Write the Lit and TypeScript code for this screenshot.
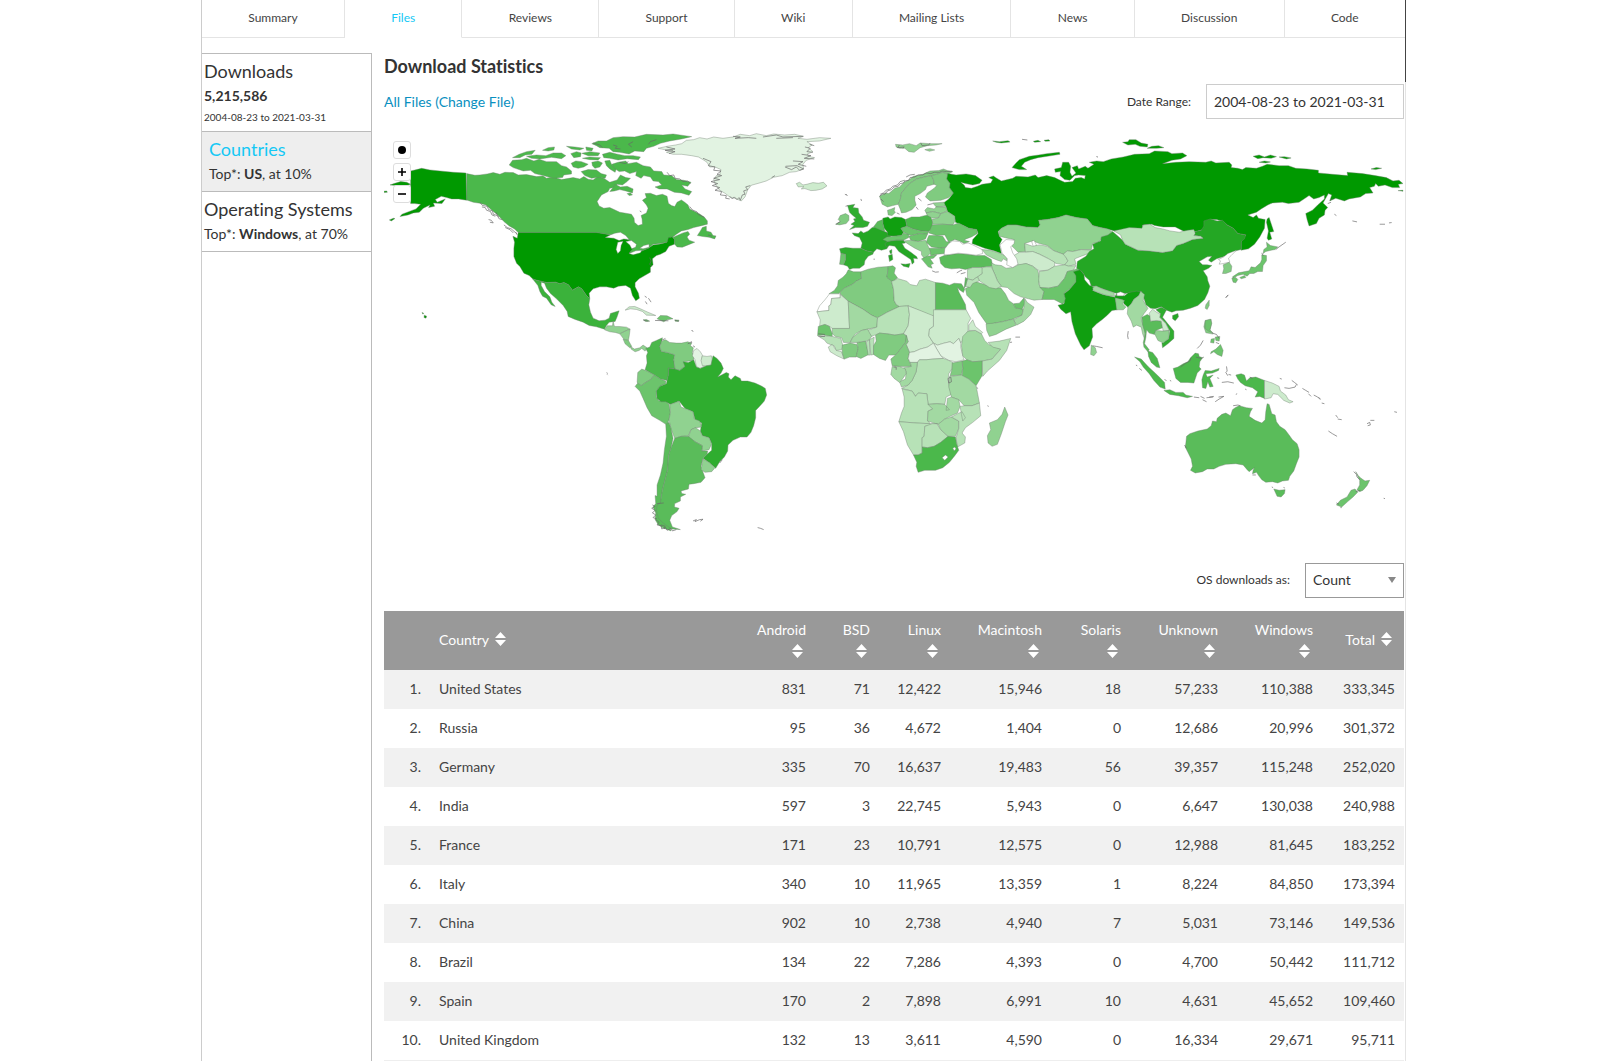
import { LitElement, html, css, svg } from "lit";
import { customElement, state } from "lit/decorators.js";

type Shape = [fill: string, points: string];
interface Region {
  x: number;
  y: number;
  shapes: Shape[];
  islands?: string;
}

const NONE = "#ffffff";
const T1 = "#e2f3e2";
const T2 = "#cdebcd";
const T3 = "#b7e2b7";
const T4 = "#a2d9a2";
const T5 = "#90d290";
const T6 = "#80cb80";
const T7 = "#6cc46c";
const T8 = "#5abc5a";
const T9 = "#4bb84b";
const T10 = "#3bb23b";
const T11 = "#2fad2f";
const T12 = "#24a724";
const T13 = "#109f10";
const T14 = "#009900";

const northAmerica: Region = {
  x: -12,
  y: 0,
  shapes: [
    [T9, "260,146 285,151 300,150 322,147 340,143 360,148 375,142 400,143 415,150 440,149 470,155 490,153 500,160 520,156 545,164 580,158 600,162 612,155 625,163 640,165 655,153 672,160 690,172 712,165 722,150 738,158 752,160 742,170 728,180 712,178 706,188 690,190 685,200 665,210 652,230 658,243 672,250 690,248 720,262 738,265 755,268 763,280 764,292 775,302 788,298 787,282 784,272 800,264 805,250 800,240 788,226 800,218 796,206 812,205 830,212 848,208 862,214 866,235 875,242 885,245 892,232 905,225 915,232 925,240 930,252 945,260 960,267 975,278 983,288 983,298 962,303 942,308 925,314 905,318 890,328 875,340 892,332 910,324 925,320 930,328 922,336 928,346 945,352 925,360 908,367 892,366 885,358 884,342 872,336 862,352 842,356 820,358 806,370 788,378 766,384 748,385 756,372 766,366 757,348 745,345 735,335 710,332 680,328 650,323 415,323 404,312 388,303 372,290 355,272 336,256 318,240 300,235 280,232 260,225"],
    [T9, "953,332 962,318 968,308 980,304 980,318 994,322 1000,332 1009,333 1005,342 988,337 970,335"],
    [T9, "388,120 398,106 425,104 440,100 462,108 478,103 500,110 530,110 545,122 560,126 575,138 575,147 552,150 548,158 520,160 490,152 465,146 452,136 430,138 400,128"],
    [T9, "398,98 418,88 440,80 466,76 456,88 436,90 420,98"],
    [T9, "440,94 470,90 498,92 520,84 545,84 558,92 545,101 515,97 480,102 455,100"],
    [T9, "488,76 505,68 524,66 522,75 505,78"],
    [T9, "560,64 585,66 612,70 600,75 575,72"],
    [T9, "573,86 590,80 604,84 602,95 582,98"],
    [T9, "618,66 640,70 636,78 620,76"],
    [T9, "636,56 655,48 680,48 700,38 730,35 765,36 800,28 850,30 880,27 936,35 905,42 870,48 842,55 822,64 800,70 792,80 765,78 748,87 720,82 700,80 688,70 660,68 650,62"],
    [T9, "668,88 690,82 710,87 735,92 760,92 782,96 776,104 742,101 715,105 690,100 672,98"],
    [T9, "606,85 630,80 660,84 655,92 625,92"],
    [T9, "574,115 588,108 605,110 625,118 612,126 595,130 580,126"],
    [T9, "608,100 630,96 662,98 655,105 630,104"],
    [T9, "636,112 655,108 668,114 660,126 645,130 638,122"],
    [T9, "604,140 625,134 650,135 664,146 680,150 676,160 655,157 635,160 615,152"],
    [T9, "675,108 690,106 695,118 710,130 706,142 690,132 680,122"],
    [T9, "696,118 715,112 738,108 745,116 770,112 790,122 812,126 822,138 846,140 852,150 875,152 890,164 912,166 934,172 924,184 906,180 916,192 936,200 928,211 905,204 884,202 862,192 838,192 826,186 846,180 836,170 820,168 812,156 792,152 784,160 768,152 770,140 750,146 735,138 718,140 704,130"],
    [T9, "690,200 700,188 706,178 722,186 742,184 760,192 758,204 738,198 720,194 704,198"],
    [T9, "742,206 752,204 758,210 748,212"],
    [T14, "92,138 110,134 125,130 150,135 180,138 220,142 258,144 260,226 236,222 215,222 200,218 184,214 166,224 172,232 196,222 186,236 160,234 164,244 146,248 150,240 130,250 118,262 100,264 84,270 60,275 66,268 92,258 108,252 122,238 104,236 92,236"],
    [T14, "30,180 42,176 62,170 80,172 92,178 75,184 50,182"],
    [T14, "11,199 20,198 22,202 13,203"],
    [T14, "28,285 40,280 45,281 34,288"],
    [T14, "415,323 650,323 680,328 710,334 735,338 745,345 757,348 762,368 748,385 766,384 788,378 806,370 820,360 842,357 862,352 866,338 877,336 884,344 884,358 868,364 858,380 842,388 830,392 818,402 820,420 812,428 812,442 795,452 778,462 766,474 766,486 776,505 779,520 768,528 758,512 752,490 738,482 716,484 702,490 680,486 660,486 640,492 628,505 630,522 620,512 606,492 596,486 585,492 578,496 566,480 552,473 540,477 528,472 500,473 470,466 458,462 448,452 432,445 420,425 410,415 402,395 402,370 404,352 399,334 412,340"],
    [NONE, "676,338 692,330 705,325 722,322 738,332 748,344 732,342 718,347 702,340"],
    [NONE, "714,352 730,349 724,362 722,378 714,386 709,374"],
    [NONE, "738,350 755,347 770,358 768,366 756,372 750,360"],
    [NONE, "748,386 768,378 786,376 782,384 760,390"],
    [NONE, "780,370 792,362 808,358 808,367 790,372"],
    [T10, "458,462 470,466 500,473 528,472 540,477 552,473 566,480 578,496 596,486 606,492 620,512 630,522 627,540 632,562 640,580 658,588 676,586 688,580 692,566 718,558 712,576 706,590 688,592 680,602 674,613 650,606 628,602 610,592 586,584 565,575 562,560 550,542 530,522 512,506 500,490 494,475 484,472 484,482 494,500 510,516 516,532 526,545 514,540 500,520 488,514 480,500 474,482"],
    [T2, "736,556 748,546 765,545 782,552 804,562 828,572 800,571 788,560 770,554 752,552"],
    [T7, "832,582 842,572 862,573 880,582 862,585 852,591"],
    [T7, "790,585 800,584 810,589 798,590"],
    [T7, "885,585 898,586 896,590 886,589"],
    [T14, "133,571 140,574 138,580 132,578"],
    [T14, "126,563 131,565 129,568"],
  ],
  islands: "M795 514l6 4M797 530l5 8M806 520l8 12M936 616l4 4M326 284l8 2l6 8l-10-2M300 232l8 10l14 2l4 10l12 4l2 10l12 4l6 10l10 2M306 246l10 2l4 8l12 4l4 10l10 4M372 300l10 8l12 4l16 14M376 308l14 6l10 10M408 322l4 8M348 262l8 14M810 398l4 10l-4 10l6 6M930 245l8 10l14 6l4 8l18 8M780 258l5 3M985 330l12 4M862 142l8 10l12-2l4 10l14 2l10 8l14-2l8 8M720 112l16 4l10-6M700 60l12 4l-6 6l16 2M760 50l-14 8l10 8M830 44l-18 6l-6 8M640 54l20 6l8 8",
};

const greenland: Region = {
  x: 708,
  y: 0,
  shapes: [
    [T1, "115,70 142,64 168,60 186,56 200,46 222,44 240,38 262,42 282,36 310,40 340,36 362,28 390,32 410,26 440,32 462,27 495,30 525,28 552,34 535,40 562,43 600,38 634,40 600,48 562,50 578,60 566,68 580,80 562,88 574,96 585,98 560,106 550,118 552,132 530,140 510,142 488,152 462,157 440,168 420,174 395,181 384,195 376,216 365,228 345,220 330,216 316,205 300,196 288,180 282,164 290,152 300,150 304,134 286,126 270,126 262,112 250,104 236,96 215,92 186,88 160,88 140,82 160,76 135,74"],
    [T2, "530,176 540,172 550,180 562,178 580,173 596,175 612,172 622,183 608,192 590,196 574,197 556,191 545,192 553,185 536,186"],
  ],
  islands: "M140 66l26 6l-30 4l30 4l-18 6M250 100l24 10l-8 12l20 4l-4 10l22 2l-12 10l14 4l-24 8l18 4l-26 6l20 6l-16 6l22 6l-14 8l20 4l-4 10l18 2l-2 8l12 2M330 214l8 8l6-6l8 8l6-6l4 8l6-16l8-2l-4-10l12-4l-6-8l14-4M496 126l20 8l14-8l10 10l12-4l-20-10l-34 2M520 108l30 2l-14 8l24 6M546 88l28 4l-20 8l30 2M556 66l16 4l-10 10l18 2M570 58l14 4M340 34l22 2l-16 4l40-2l24 2M430 36l40-6l20 6l60-2M470 40l50-2M456 158l10-6M680 208l4 4",
};

const southAmerica: Region = {
  x: 528,
  y: 585,
  shapes: [
    [T5, "134,30 142,18 158,18 160,4 164,20 178,20 200,22 211,28 196,34 180,42 166,38 150,36"],
    [T5, "180,42 196,34 211,28 209,45 206,62 192,58"],
    [T6, "190,58 206,62 216,80 210,84 196,72"],
    [T5, "212,80 224,88 240,84 250,76 262,84 256,94 246,86 238,92 226,96 214,88"],
    [T9, "258,86 270,82 276,68 290,62 308,54 306,66 300,80 305,95 322,98 345,105 342,120 346,148 326,145 326,166 322,182 302,178 284,166 270,158 256,150 262,130 260,108 264,98"],
    [T6, "310,62 318,60 330,68 350,70 366,70 384,66 396,70 392,78 401,84 398,98 404,112 400,122 374,126 376,140 360,152 346,148 342,120 345,105 322,98 305,95 300,80 306,66"],
    [T1, "402,92 412,86 422,96 428,106 426,122 434,140 420,146 410,140 406,120 398,108"],
    [T2, "428,108 442,110 455,108 458,118 454,136 440,138 428,138 424,122"],
    [T6, "234,158 246,148 262,154 284,166 272,180 258,188 244,198 232,188"],
    [T7, "284,166 302,178 318,184 318,192 300,200 290,214 290,232 298,244 316,242 328,254 332,278 328,300 322,316 300,302 276,288 262,264 250,236 240,214 226,200 234,190 244,198 258,188 272,180"],
    [T11, "326,145 346,148 360,152 376,140 370,126 386,128 402,120 410,142 422,146 440,138 454,136 460,108 472,116 484,130 491,146 484,160 474,172 500,158 508,162 506,172 514,180 526,168 542,176 545,184 564,184 586,190 604,198 617,206 621,226 614,244 598,262 588,272 588,294 582,318 574,338 562,352 542,352 520,362 505,376 504,394 494,412 480,426 468,446 450,430 430,416 442,404 456,392 456,372 448,354 428,348 422,334 426,310 406,300 400,276 376,266 358,244 332,254 318,246 304,246 292,236 290,214 300,200 320,192 322,182 326,166"],
    [T5, "330,254 344,250 358,244 364,262 380,268 400,276 404,298 420,304 426,322 408,324 394,330 386,348 364,350 345,356 334,328 328,300 332,278"],
    [T5, "394,330 408,324 422,334 428,348 448,354 456,372 448,390 426,394 428,378 406,366 386,352"],
    [T8, "318,314 328,308 334,328 340,356 334,384 326,410 324,450 316,480 308,512 304,540 310,556 298,560 300,590 312,606 330,616 334,634 312,626 296,616 286,600 288,580 280,562 288,552 286,528 292,530 292,496 302,466 310,430 314,390 320,350"],
    [T8, "345,356 364,350 386,350 406,366 428,378 426,394 444,394 442,404 430,416 424,440 430,458 436,474 424,488 402,492 388,494 386,508 364,514 366,522 378,524 362,532 362,544 345,552 344,562 358,566 352,576 336,588 330,602 338,622 362,630 336,628 312,612 296,596 290,574 292,556 302,550 308,512 316,480 324,450 326,410 334,384"],
    [T5, "430,418 448,428 466,444 456,456 436,458 424,450"],
  ],
  islands: "M278 556l8 4l-10 6l10 6l-8 8l10 6l-8 8l12 4M288 600l10 8l-6 8l12 2l2 10l12-4l4 8l12-6l4 8l12-4M304 616l12 4l-2 8M400 604l10-4l-4 6l14-6l10-1l-8 6M594 624l8 2l10 4M141 158l2 4M142 164l2 2M397 32l2 3M305 62l12-6M384 72l12-4l-2-4M400 78l6 4M488 420l-8 10M252 2l14 2M286 2l40 1M346 2l12 2M292 552l20-2",
};

const eurasia: Region = {
  x: 1248,
  y: 0,
  shapes: [
    [T6, "240,214 258,204 268,206 286,190 300,186 314,172 330,164 342,154 370,148 392,138 418,137 432,132 444,137 460,140 446,148 430,142 412,148 396,152 376,156 352,162 330,176 318,190 306,204 302,226 296,238 280,242 264,246 248,238"],
    [T6, "396,152 376,156 352,162 330,176 318,190 306,204 302,226 296,238 302,252 306,264 320,262 338,254 350,240 346,226 346,214 362,206 378,194 382,184 404,178 402,164"],
    [T6, "396,152 412,148 430,142 446,148 442,162 452,176 450,188 462,204 448,218 424,226 392,228 378,216 384,204 404,190 412,182 404,178 402,164"],
    [T14, "445,146 470,150 500,147 528,152 548,166 540,176 520,180 498,176 484,172 494,180 498,188 516,190 534,184 548,178 574,174 580,164 568,158 582,153 592,160 606,168 640,160 650,154 686,156 708,150 716,158 742,152 766,158 778,164 796,172 820,170 828,160 846,158 856,162 858,152 838,150 826,152 812,166 796,164 782,152 784,140 768,142 766,132 786,128 790,112 808,112 814,124 812,142 818,154 830,144 818,128 834,122 838,132 858,124 866,130 884,118 870,112 892,108 912,110 936,102 972,96 1006,88 1050,86 1066,78 1106,80 1118,86 1150,84 1163,92 1144,102 1118,106 1090,116 1130,112 1170,110 1220,112 1236,108 1250,114 1290,112 1298,120 1296,128 1316,130 1330,134 1340,128 1372,130 1390,124 1404,118 1440,122 1468,122 1490,130 1524,132 1558,136 1558,144 1600,148 1646,152 1644,142 1690,146 1728,152 1762,158 1782,168 1800,166 1812,176 1798,178 1802,188 1780,188 1758,180 1738,184 1730,176 1726,184 1712,188 1722,204 1700,206 1684,216 1650,222 1636,228 1610,220 1592,228 1598,210 1588,206 1572,234 1586,248 1578,256 1576,270 1560,280 1552,296 1530,303 1524,284 1520,266 1540,256 1556,240 1576,222 1576,210 1560,218 1544,222 1530,212 1518,220 1500,232 1468,236 1450,232 1420,234 1406,240 1386,252 1372,262 1346,270 1362,278 1372,270 1378,280 1398,284 1396,310 1382,336 1366,358 1348,372 1326,376 1326,350 1340,330 1316,326 1302,310 1284,300 1270,288 1252,284 1234,284 1218,296 1212,314 1190,320 1152,318 1128,306 1092,306 1066,302 1058,298 1030,300 1030,312 1004,310 976,316 945,318 925,312 900,307 880,302 864,282 832,278 800,270 776,278 742,284 718,286 722,300 716,308 680,306 650,300 626,300 606,310 596,320 600,334 608,344 600,360 606,386 584,378 556,370 540,364 518,356 520,344 536,326 532,314 508,310 492,302 468,292 466,274 444,260 440,246 432,234 448,222 462,204 450,188 452,176 442,162"],
    [T14, "638,128 650,114 660,104 690,94 718,90 742,86 780,82 782,88 744,94 716,98 694,104 676,112 666,124 682,134 660,134"],
    [T14, "580,48 600,50 626,47 632,51 606,54 590,52"],
    [T14, "702,49 716,46 724,50 706,52"],
    [T14, "734,46 748,44 752,48 738,49"],
    [T5, "290,66 288,58 310,60 330,56 350,62 362,54 390,56 428,56 410,60 384,62 362,68 344,82 328,80 316,70 300,70"],
    [T5, "376,74 392,71 406,75 390,79"],
    [T11, "144,242 166,238 160,248 176,250 178,264 188,276 192,286 210,292 204,304 190,308 168,308 150,314 164,302 154,298 166,290 162,282 170,280 158,270 150,262"],
    [T6, "122,272 138,266 148,272 148,286 140,296 120,300 108,298 122,290 116,284"],
    [T12, "158,324 176,326 184,318 192,324 206,318 218,308 228,306 244,314 256,320 276,328 272,338 262,348 268,362 262,372 246,376 232,372 222,382 200,378 184,370 188,354 180,338 164,332"],
    [T11, "120,372 138,368 160,370 184,370 200,378 222,382 220,388 206,394 196,408 194,420 180,430 160,430 150,434 144,424 132,420 138,404 138,388 124,386"],
    [T7, "124,386 138,388 138,404 132,420 120,418 122,404"],
    [T13, "250,280 266,276 272,282 286,276 306,278 318,284 322,304 304,310 312,322 306,332 282,334 264,332 264,322 254,310 250,296"],
    [T8, "222,306 234,290 250,284 250,296 254,310 256,320 240,314"],
    [T6, "264,256 276,252 286,248 284,258 288,262 278,272 266,270"],
    [T7, "250,344 262,336 282,334 306,332 312,324 328,328 328,338 312,346 290,346 264,350"],
    [T12, "256,356 264,350 290,346 312,346 318,354 308,356 316,370 334,382 352,396 354,402 342,400 344,412 338,418 334,404 316,392 298,380 286,364 270,362 260,366"],
    [T12, "304,417 318,418 332,416 328,428 312,424"],
    [T12, "267,392 278,388 280,404 270,410"],
    [T12, "270,378 277,374 277,386 272,386"],
    [T9, "318,284 336,276 360,276 384,270 394,276 400,292 396,312 388,320 364,318 340,312 322,304"],
    [T7, "304,310 322,304 340,312 364,318 388,320 384,328 360,326 334,332 312,322"],
    [T7, "328,334 360,326 384,328 378,342 356,350 334,346"],
    [T5, "400,234 434,232 438,244 410,246"],
    [T5, "376,256 384,248 404,252 410,246 438,246 444,258 424,266 400,260 380,264"],
    [T5, "380,264 400,260 424,266 418,278 400,280 384,272"],
    [T5, "418,278 424,266 444,260 466,274 466,290 460,300 430,298 400,298 398,284"],
    [T7, "398,300 430,298 460,300 478,294 492,302 508,310 532,314 534,326 516,336 500,342 494,346 510,350 494,356 480,348 466,344 448,352 436,330 412,332 388,324"],
    [T7, "388,332 412,332 430,334 440,350 452,352 446,366 420,370 396,366 380,352"],
    [T7, "388,370 420,370 446,366 438,386 414,388 394,392"],
    [T5, "312,348 334,346 356,350 378,346 388,368 394,384 384,394 374,400 366,390 366,380 346,370 330,360"],
    [T7, "366,402 384,394 412,390 402,400 392,402 402,416 394,420 398,430 386,426 376,414"],
    [T8, "420,398 434,392 450,390 476,386 500,388 530,392 556,392 576,404 580,424 560,426 540,428 520,428 498,434 480,430 456,432 436,428 424,416"],
    [NONE, "434,390 436,372 448,356 460,348 480,350 490,358 506,354 520,360 548,374 550,386 530,391 500,387 476,385 450,389"],
    [T4, "548,374 572,376 604,386 624,396 622,408 612,402 606,410 594,406 580,400 560,390"],
    [T5, "598,320 606,310 626,300 650,300 680,306 716,308 722,300 718,286 742,284 776,278 800,270 832,278 864,282 880,302 900,307 925,312 938,320 928,332 908,338 898,352 880,356 876,374 846,374 820,380 804,378 792,388 764,378 744,362 720,356 700,348 676,356 678,380 656,382 646,372 632,358 644,344 624,340 600,334"],
    [NONE, "697,350 704,346 712,362 702,366"],
    [T3, "676,356 700,364 720,360 744,364 764,378 792,388 820,384 800,398 806,408 796,420 770,416 748,402 720,388 700,380 678,382"],
    [T2, "644,392 660,382 678,382 700,380 720,388 748,402 766,412 766,424 746,436 720,438 700,424 680,416 656,422 650,408"],
    [T3, "792,388 804,378 820,380 846,374 878,376 868,386 846,394 826,402 830,418 808,424 796,420 806,408 800,398"],
    [T4, "576,414 588,420 606,422 620,430 640,428 656,420 680,416 700,424 716,438 720,462 718,478 734,500 728,524 704,526 688,522 664,516 644,506 624,488 606,486 594,468 586,448 578,430"],
    [NONE, "602,360 620,344 646,346 644,356 634,366 640,384 652,402 656,418 640,428 622,420 624,402 608,384"],
    [T3, "720,440 746,436 766,424 796,420 808,424 830,422 822,436 804,440 796,460 776,484 748,490 722,488 718,466"],
    [T3, "544,430 560,426 576,426 586,448 594,468 606,484 590,492 570,488 540,468 534,456 548,446"],
    [T3, "504,434 520,428 548,428 548,446 520,466 504,462"],
    [T3, "498,484 504,462 520,466 534,456 540,468 520,476 512,488"],
    [T8, "494,490 498,458 504,462 498,486"],
    [T7, "722,488 748,490 776,484 796,460 804,440 822,436 840,428 856,436 846,448 830,450 832,468 812,492 794,506 800,524 790,538 776,530 764,524 728,524 734,500"],
  ],
  islands: "M240 214l10-8l6 2l8-10l12-4l8-8l12-2l6-8l10-2l4-6l12-2l4-8l14-2l10-6l14 0l10-6l14 2l10-4l16 0l8-4l12 2l18-1M242 208l10-4l8-8l12-4l8-8l14-4l8-10l14-4M320 156l12-6l14-2M244 222l8 8M668 43l16 2M136 208l6 3M184 222l2 6M138 244l8-2M110 298l12-8M398 438l10 4l10-1M472 444l10-6l6-2M350 246l6 8M356 220l10 8M300 60l-6 8l20-2l-4 4M364 54l4 8l20-2l4-6M892 95l3 1M292 264l8 4M222 403l4 0M384 240l16-4",
};

const eastAsia: Region = {
  x: 2088,
  y: 0,
  shapes: [
    [T14, "130,52 146,50 150,44 170,44 186,54 206,58 204,66 182,64 168,58 146,60"],
    [T14, "204,70 218,64 238,62 254,68 232,70"],
    [T14, "522,94 540,90 556,96 574,90 592,95 576,100 552,98 536,101"],
    [T14, "600,96 616,95 636,99 622,102"],
    [T14, "540,112 556,108 574,111 560,114"],
    [T14, "876,132 892,128 908,130 890,134"],
    [T14, "957,197 972,196 972,199"],
    [T14, "562,292 564,282 570,278 576,296 584,320 572,322 578,342 568,346 564,340 568,318"],
    [T12, "100,320 114,332 130,346 138,358 176,376 206,378 250,383 280,378 292,362 312,356 340,344 372,340 364,334 344,332 348,320 366,316 374,304 374,288 394,282 414,288 430,286 444,300 462,310 476,326 500,330 496,342 486,350 486,374 470,378 448,388 432,396 412,402 396,412 388,406 398,394 384,396 360,410 370,420 384,420 398,422 388,430 372,438 384,456 386,468 392,484 386,504 376,524 356,542 334,550 312,556 290,558 278,562 262,556 246,546 228,552 214,550 200,540 194,520 186,500 170,506 150,504 128,508 104,504 76,494 50,484 36,484 30,466 18,456 8,440 -8,430 -6,410 20,394 30,380 44,372 40,358 64,348 66,336 86,330"],
    [T12, "280,572 296,566 298,576 288,588 280,582"],
    [T3, "104,318 130,312 150,308 188,310 192,300 212,298 228,308 250,312 272,318 300,322 326,316 344,314 348,326 344,332 364,334 372,340 340,344 312,356 292,362 280,378 250,383 206,378 176,376 138,358 130,346 124,330"],
    [NONE, "418,404 434,396 446,386 472,376 456,392 448,400 452,412 432,416 420,418 424,408"],
    [T6, "432,420 450,412 458,424 456,440 440,446 430,446 434,432"],
    [T7, "562,352 574,362 596,366 588,374 576,376 560,380 552,386 554,374 564,366"],
    [T7, "548,390 562,392 562,408 552,422 550,440 536,440 524,446 512,446 504,454 492,448 476,452 462,460 460,456 478,444 498,440 510,438 516,426 528,428 544,414 548,404"],
    [T7, "458,460 470,458 476,464 470,474 462,472"],
    [T7, "482,458 496,452 500,458 486,462"],
    [T6, "380,540 390,526 390,542 384,554 378,550"],
    [T6, "378,588 396,584 396,602 392,618 402,628 380,624 374,606"],
  ],
  islands: "M590 374l10-8l20-14M440 518l8-8M766 268l6 4M820 288l14 3M902 298l16 0M930 294l8-1M746 236l10-4M752 226l8-4M52 95l3 1M548 384l4 8",
};

const africa: Region = {
  x: 1248,
  y: 405,
  shapes: [
    [T7, "146,30 162,36 184,36 186,56 170,64 158,74 136,84 122,96 118,102 88,102 104,92 114,78 116,62 130,52 140,42"],
    [NONE, "90,102 122,102 122,114 96,116 94,134 88,138 88,152 52,156 60,138 76,120"],
    [T6, "184,36 206,28 236,22 266,20 264,40 262,52 276,64 282,88 284,122 290,134 300,140 262,158 234,174 216,166 190,148 146,124 122,102 122,96 136,84 158,74 170,64 186,56"],
    [T7, "266,20 280,18 288,24 284,40 294,54 284,62 276,64 262,52 264,40"],
    [T3, "294,56 322,64 332,74 352,78 360,62 378,58 408,68 408,166 396,168 326,138 300,140 290,134 284,122 282,88 276,64 284,62"],
    [T8, "408,68 430,70 450,76 464,70 486,72 496,88 492,98 480,90 474,82 478,96 498,134 500,150 408,150"],
    [T2, "52,156 88,152 88,138 94,134 96,116 122,114 122,104 146,124 150,206 98,206 90,200 76,194 60,200 62,180"],
    [T4, "146,124 190,148 216,166 234,174 232,202 204,208 186,212 168,222 160,232 152,248 132,248 126,234 108,230 98,222 98,206 150,206"],
    [T3, "234,174 262,158 300,140 326,138 330,164 326,198 312,222 286,226 262,222 240,220 226,226 216,230 202,212 232,202"],
    [T2, "326,138 362,152 402,168 402,200 390,208 388,228 402,250 384,262 362,268 344,276 330,278 320,254 326,246 320,226 312,222 326,198 330,164"],
    [T2, "402,150 500,150 514,176 506,190 506,212 492,238 484,250 478,236 462,252 452,246 434,250 414,256 402,250 388,228 390,208 402,200"],
    [T1, "402,250 414,256 434,250 452,246 462,252 478,236 484,250 484,262 490,288 494,300 470,306 448,302 424,288 412,268"],
    [T7, "56,200 76,194 90,200 98,222 98,230 72,226 54,228"],
    [T3, "60,232 76,228 98,230 124,236 130,258 126,270 110,272 104,258 92,254 82,250 74,240"],
    [T2, "86,262 98,254 110,272 126,276 134,298 112,288 92,276"],
    [T6, "128,256 152,250 172,254 176,266 170,292 150,292 134,298 128,280"],
    [T6, "172,248 198,244 204,270 208,284 184,296 170,290 176,266"],
    [T4, "152,248 160,232 186,212 204,208 216,230 210,240 198,244 172,248"],
    [T3, "200,246 210,240 212,286 206,286"],
    [T3, "210,240 224,232 222,262 222,284 214,286"],
    [T6, "228,226 240,220 262,222 286,226 312,222 322,230 318,248 300,272 288,286 268,286 258,302 240,296 222,284 222,258 230,244"],
    [T6, "320,226 326,246 320,254 330,278 326,296 336,320 300,320 278,318 274,298 288,286 300,272 318,248"],
    [T1, "330,278 344,276 362,268 384,262 402,250 412,268 424,288 432,296 400,298 380,300 360,300 354,308 332,308 326,296"],
    [T3, "354,308 360,300 380,300 400,298 432,296 448,302 460,308 458,326 448,342 446,360 450,382 456,404 440,412 436,434 412,432 386,434 382,402 356,400 348,410 338,394 306,386 326,376 338,362 350,336"],
    [T4, "332,308 354,308 350,336 338,362 326,376 306,382 300,366 318,358 320,336 312,324 336,320"],
    [T4, "278,320 300,320 318,328 320,342 306,362 300,368 284,356 274,344"],
    [T4, "490,230 506,214 528,212 546,222 556,242 568,254 604,268 578,298 548,304 520,306 502,300 490,288 486,258"],
    [T2, "508,196 520,180 528,200 550,218 546,222 528,212 508,212"],
    [T3, "566,248 600,244 634,236 622,272 600,302 564,334 550,350 548,304 578,298 604,268 580,262"],
    [T7, "488,304 502,300 520,306 548,304 548,348 530,378 508,358 488,348 490,326"],
    [T6, "458,310 488,304 490,326 486,346 452,348 458,326"],
    [T4, "450,350 486,346 508,358 530,378 534,398 540,430 518,438 494,438 478,420 456,412 448,382"],
    [T3, "308,388 338,394 348,410 356,400 382,402 386,434 400,448 386,454 384,480 392,492 350,490 298,486 306,460 314,440 314,412"],
    [T4, "386,434 412,432 436,434 450,450 440,452 444,416 456,412 478,420 482,440 474,460 456,468 436,478 416,494 384,484 386,454 400,448"],
    [T3, "298,486 350,490 392,492 414,492 376,500 374,530 368,534 368,580 356,586 342,586 324,556 312,516"],
    [T3, "376,500 398,492 412,492 424,510 446,530 424,548 404,560 384,564 368,562 368,534 374,530"],
    [T4, "416,494 436,478 456,472 478,484 478,506 468,530 446,530 424,510"],
    [T3, "494,438 518,438 540,430 544,468 520,488 498,504 488,520 498,532 496,550 474,562 470,534 478,506 478,484 456,472 474,462 488,456 498,474 490,484 486,464 482,440"],
    [T9, "342,586 356,586 368,580 368,562 384,564 404,560 424,548 446,530 468,532 472,554 478,572 466,588 450,608 430,624 408,632 376,632 356,638 350,620 352,608"],
    [NONE, "428,594 438,586 446,592 436,602"],
    [NONE, "460,566 466,562 470,568 464,573"],
    [T5, "616,442 626,466 618,486 606,522 594,554 578,560 566,550 564,528 574,510 570,490 594,480 608,464"],
    [T6, "498,86 510,80 514,64 530,66 556,74 582,84 604,84 618,102 628,122 640,130 648,144 672,148 668,166 640,178 608,186 584,190 566,198 552,178 538,158 524,128 502,106"],
    [T7, "642,132 660,130 674,114 676,132 668,148 648,144"],
    [T4, "676,116 684,128 704,142 694,164 674,184 652,196 642,180 668,166 674,140"],
    [T5, "560,192 584,190 608,186 642,178 650,196 620,208 590,224 570,230 562,212"],
  ],
  islands: "M56 222l20 2M56 230l20 0M648 232l14 0M632 248l6-1M564 438l4 2M532 384l4 2M454 352l-8 4l2 14l8-4zM282 322l8 0l0 8M484 42l14-4",
};

const southAsiaPacific: Region = {
  x: 1968,
  y: 405,
  shapes: [
    [T13, "102,36 122,30 134,44 136,60 150,76 166,82 160,92 190,104 226,112 232,100 232,108 256,108 268,98 292,94 308,96 298,108 284,118 276,132 266,142 254,132 250,120 228,116 234,150 218,152 204,166 188,180 172,192 158,206 160,232 150,258 134,270 124,256 108,222 98,186 94,156 80,162 64,148 56,136 74,132 78,116 74,102 90,90 110,66 110,48"],
    [T4, "160,84 170,78 190,88 224,98 226,110 200,106 176,98 162,92"],
    [NONE, "232,100 244,96 258,102 250,108 234,108"],
    [T5, "228,114 244,118 256,122 250,132 260,142 252,150 232,150"],
    [T4, "266,142 276,132 284,118 298,108 304,94 316,104 312,122 326,146 314,162 306,174 310,192 318,214 316,238 310,222 306,202 292,196 282,202 276,184 264,162"],
    [T8, "308,172 324,164 332,168 334,184 352,182 366,184 370,204 350,212 346,224 330,220 322,210 320,232 316,252 330,270 326,276 314,262 312,248 318,222 310,194"],
    [T2, "330,160 340,148 350,156 364,164 362,174 380,192 390,212 372,214 366,184 352,182 334,184 332,168"],
    [T11, "350,150 366,142 382,150 370,172 386,192 404,214 404,236 386,252 370,264 368,250 388,238 392,214 380,190 362,172 364,162"],
    [T5, "346,222 350,212 372,214 390,212 388,236 372,250 356,242"],
    [T9, "326,274 340,278 354,296 362,324 352,322 336,308 328,290"],
    [T9, "286,292 306,298 328,322 346,338 360,352 376,368 378,388 362,382 344,362 330,342 312,322 302,306"],
    [T9, "374,392 392,390 410,398 432,398 440,406 460,410 444,414 418,408 392,404"],
    [T9, "402,326 416,322 432,312 446,306 454,294 468,280 478,282 480,290 490,294 482,306 480,322 486,328 474,340 464,370 446,368 424,368 410,356"],
    [T9, "498,332 516,334 540,326 538,332 520,340 500,342 504,352 522,346 512,356 522,380 512,382 506,366 500,386 490,384 488,360 492,346"],
    [T9, "590,346 606,342 616,346 622,364 632,354 650,352 676,362 676,416 662,410 648,412 656,396 640,384 618,378 604,368 596,358"],
    [T2, "676,362 700,370 720,380 724,394 740,406 748,420 762,426 752,430 734,422 716,404 702,402 696,414 676,418"],
    [T7, "498,182 514,178 518,190 512,210 522,220 508,214 498,206"],
    [T7, "516,276 530,268 544,254 552,272 548,290 534,284 524,276 514,282"],
    [T7, "516,238 526,236 524,250 514,248"],
    [T7, "528,232 542,230 540,244 530,242"],
    [T5, "156,256 168,264 172,278 164,288 154,284"],
    [T8, "442,530 452,522 476,514 504,508 516,498 520,484 532,486 534,476 548,464 560,460 574,468 580,450 588,444 600,438 622,444 640,446 634,456 630,470 648,482 668,490 678,480 680,456 684,432 690,434 698,462 708,466 712,486 722,500 738,510 750,526 760,540 774,552 780,570 780,592 772,612 764,634 752,650 748,662 730,664 716,670 700,666 680,668 668,660 660,650 652,638 640,642 642,632 646,624 630,636 624,630 612,616 590,612 560,614 540,620 524,628 504,628 490,636 468,640 454,632 460,620 456,598 446,578 438,562 440,550"],
    [T8, "704,688 720,692 738,690 736,702 726,712 714,710"],
    [T7, "950,636 958,648 966,656 978,664 992,662 984,678 972,692 962,696 954,690 962,676 962,662"],
    [T7, "936,692 948,688 956,698 942,712 926,726 908,742 892,736 904,722 924,712"],
  ],
  islands: "M160 258l12 2l18 4M267 214l-2 14l2 10M474 266l10-10l8-14M566 106l-6 8M290 316l4 2M300 326l8 6M376 358l6 6M392 362l4 2M464 412l16 2M484 410l12 6M502 414l20-2M490 420l12 6M528 426l12-8l14-8l-16 2M562 320l2 14l-4 4l6 10M548 368l18-2l18 4M568 344l8 2M534 354l6 2M590 404l4-2M618 388l4 2M632 352l8 4M722 356l6 2M736 384l14 2l18-4l4-8M758 362l8 6l10 8M790 386l10 6l10 6M808 402l8 8M824 406l12 6l8 8M838 412l6 6M848 430l8 2M890 466l6 8M896 478l12 2M868 514l12 8l14 8M984 492l8-4l2 8l-8 2M994 482l12 0M1066 456l8 2M1034 716l4 1M582 438l14-2l8 2M640 646l10 0M698 682l4 2M734 682l2 4M944 636l8 8l2 8l8 8M950 696l14-4M892 730l8 4M904 744l4 0M520 220l12 4l8 12M530 248l10 4M470 292l16 4l8-4M436 556l6 10M424 322l16-12l12-6l4-10M510 412l14-2",
};

const regions = [northAmerica, greenland, southAmerica, africa, eurasia, eastAsia, southAsiaPacific];

const tabs = ["Summary", "Files", "Reviews", "Support", "Wiki", "Mailing Lists", "News", "Discussion", "Code"];

const columns: [string, string][] = [
  ["Android", "c-android"],
  ["BSD", "c-bsd"],
  ["Linux", "c-linux"],
  ["Macintosh", "c-mac"],
  ["Solaris", "c-solaris"],
  ["Unknown", "c-unknown"],
  ["Windows", "c-windows"],
];

const rows: [string, ...number[]][] = [
  ["United States", 831, 71, 12422, 15946, 18, 57233, 110388, 333345],
  ["Russia", 95, 36, 4672, 1404, 0, 12686, 20996, 301372],
  ["Germany", 335, 70, 16637, 19483, 56, 39357, 115248, 252020],
  ["India", 597, 3, 22745, 5943, 0, 6647, 130038, 240988],
  ["France", 171, 23, 10791, 12575, 0, 12988, 81645, 183252],
  ["Italy", 340, 10, 11965, 13359, 1, 8224, 84850, 173394],
  ["China", 902, 10, 2738, 4940, 7, 5031, 73146, 149536],
  ["Brazil", 134, 22, 7286, 4393, 0, 4700, 50442, 111712],
  ["Spain", 170, 2, 7898, 6991, 10, 4631, 45652, 109460],
  ["United Kingdom", 132, 13, 3611, 4590, 0, 16334, 29671, 95711],
];

const sortIcon = html`<svg class="sort" viewBox="0 0 11 14" aria-hidden="true">
  <path d="M5.5 0L11 6H0zM5.5 14L0 8h11z" fill="currentColor" />
</svg>`;

@customElement("world-map")
export class WorldMap extends LitElement {
  static styles = css`
    :host {
      display: block;
      position: relative;
    }
    .map {
      display: block;
      width: 100%;
      height: auto;
    }
    .land {
      stroke: #6f7f6f;
      stroke-opacity: 0.6;
      stroke-width: 2;
      stroke-linejoin: round;
    }
    .isles {
      fill: none;
      stroke: #666;
      stroke-width: 2;
    }
    .controls {
      position: absolute;
      left: 9px;
      top: 16px;
      display: flex;
      flex-direction: column;
      gap: 4px;
    }
    .control {
      display: grid;
      place-items: center;
      width: 18px;
      height: 18px;
      padding: 0;
      background: #fff;
      border: 1px solid #ddd;
      border-radius: 3px;
    }
    .glyph {
      display: block;
      width: 10px;
      height: 10px;
    }
  `;

  render() {
    return html`
      <svg class="map" viewBox="0 0 3063 1245" role="img" aria-label="Downloads by country">
        ${regions.map(
          (r) => svg`<g transform="translate(${r.x} ${r.y})">
            ${r.shapes.map(([fill, points]) => svg`<polygon class="land" fill=${fill} points=${points}></polygon>`)}
            <path class="isles" d=${r.islands ?? ""}></path>
          </g>`
        )}
      </svg>
      <div class="controls">
        <button class="control" type="button" aria-label="Reset map">
          <svg class="glyph" viewBox="0 0 10 10"><circle cx="5" cy="5" r="4" /></svg>
        </button>
        <button class="control" type="button" aria-label="Zoom in">
          <svg class="glyph" viewBox="0 0 10 10"><path d="M1 5h8M5 1v8" stroke="#000" stroke-width="1.6" /></svg>
        </button>
        <button class="control" type="button" aria-label="Zoom out">
          <svg class="glyph" viewBox="0 0 10 10"><path d="M1 5h8" stroke="#000" stroke-width="1.6" /></svg>
        </button>
      </div>
    `;
  }
}

@customElement("app-root")
export class AppRoot extends LitElement {
  @state() private range = "2004-08-23 to 2021-03-31";

  static styles = css`
    :host {
      display: block;
      box-sizing: border-box;
      padding-left: 7px;
      background: #fff;
      color: #444;
      font: 14px/20px Lato, "Liberation Sans", sans-serif;
      font-variant-ligatures: none;
    }
    .shell {
      position: relative;
      box-sizing: border-box;
      max-width: 1205px;
      margin: 0 auto;
      border-left: 1px solid #ccc;
      border-right: 1px solid #e4e4e4;
    }
    .edge {
      position: absolute;
      top: 0;
      right: -1px;
      width: 1px;
      height: 82px;
      background: #444;
    }
    .tabs {
      display: flex;
    }
    .tab {
      flex: 1 1 auto;
      box-sizing: border-box;
      height: 38px;
      border-right: 1px solid #e4e4e4;
      border-bottom: 1px solid #e4e4e4;
      color: #444;
      font-size: 12px;
      line-height: 36px;
      text-align: center;
      text-decoration: none;
    }
    .tab:last-child {
      border-right: 0;
    }
    .tab.active {
      border-bottom-color: transparent;
      color: #14c8f5;
    }
    .body {
      display: flex;
      gap: 12px;
    }
    .side {
      flex: none;
      box-sizing: border-box;
      width: 170px;
      margin-top: 15px;
      border-top: 1px solid #bbb;
      border-right: 1px solid #bbb;
    }
    .card {
      display: block;
      padding: 5px 2px;
      border-bottom: 1px solid #bbb;
      color: #333;
      text-decoration: none;
    }
    .card.current {
      padding-left: 7px;
      background: #eee;
    }
    .card.current .name {
      color: #14c8f5;
    }
    .name {
      font-size: 18px;
      line-height: 25px;
    }
    .line,
    .total {
      line-height: 24px;
    }
    .total {
      font-weight: 700;
    }
    .period {
      font-size: 10px;
      line-height: 18px;
    }
    .main {
      flex: 1;
      min-width: 0;
      padding: 16px 1px 0 0;
    }
    .title {
      margin: 0;
      color: #333;
      font-size: 18px;
      font-weight: 700;
      line-height: 24px;
    }
    .bar {
      display: flex;
      align-items: center;
      margin-top: 6px;
    }
    .change {
      color: #0a90c0;
      text-decoration: none;
    }
    .label {
      margin-left: auto;
      margin-right: 15px;
      font-size: 12px;
      color: #333;
    }
    .range,
    .unit {
      box-sizing: border-box;
      height: 35px;
      padding: 0 7px;
      border: 1px solid #ccc;
      border-radius: 0;
      background: #fff;
      color: #333;
      font: inherit;
    }
    .range {
      width: 198px;
    }
    .world {
      margin-top: 6px;
    }
    .bar.units {
      margin-top: 23px;
    }
    .picker {
      position: relative;
    }
    .unit {
      display: block;
      width: 99px;
      border-color: #999;
      appearance: none;
    }
    .caret {
      position: absolute;
      right: 8px;
      top: 14px;
      width: 8px;
      height: 6px;
      pointer-events: none;
    }
    .stats {
      width: 100%;
      margin-top: 13px;
      border-collapse: collapse;
      table-layout: fixed;
      border-bottom: 1px solid #eee;
    }
    .c-rank { width: 46px; }
    .c-android { width: 70px; }
    .c-bsd { width: 64px; }
    .c-linux { width: 71px; }
    .c-mac { width: 101px; }
    .c-solaris { width: 79px; }
    .c-unknown { width: 97px; }
    .c-windows { width: 95px; }
    .c-total { width: 82px; }
    .head {
      height: 59px;
      padding: 0 9px;
      background: #999;
      color: #fff;
      font-weight: 400;
      text-align: right;
    }
    .cell {
      height: 39px;
      padding: 0 9px;
      text-align: right;
    }
    .left {
      text-align: left;
    }
    .row:nth-child(odd) {
      background: #f1f1f1;
    }
    .sorter {
      display: inline-flex;
      align-items: center;
      gap: 6px;
      padding: 0;
      border: 0;
      background: none;
      color: inherit;
      font: inherit;
    }
    .sorter.stacked {
      flex-direction: column;
      align-items: flex-end;
      gap: 4px;
      padding-bottom: 2px;
    }
    .sort {
      width: 11px;
      height: 14px;
      margin: 0 3px 2px 0;
    }
    .stacked .sort {
      margin-bottom: 0;
    }
  `;

  private onRange(e: Event) {
    this.range = (e.target as HTMLInputElement).value;
  }

  render() {
    return html`
      <div class="shell">
        <span class="edge"></span>
        <nav class="tabs">
          ${tabs.map((t) => html`<a class="tab ${t === "Files" ? "active" : ""}" href="#">${t}</a>`)}
        </nav>
        <div class="body">
          <aside class="side">
            <a class="card" href="#">
              <div class="name">Downloads</div>
              <div class="total">5,215,586</div>
              <div class="period">2004-08-23 to 2021-03-31</div>
            </a>
            <a class="card current" href="#">
              <div class="name">Countries</div>
              <div class="line">Top*: <b>US</b>, at 10%</div>
            </a>
            <a class="card" href="#">
              <div class="name">Operating Systems</div>
              <div class="line">Top*: <b>Windows</b>, at 70%</div>
            </a>
          </aside>
          <main class="main">
            <h1 class="title">Download Statistics</h1>
            <div class="bar">
              <a class="change" href="#">All Files (Change File)</a>
              <label class="label" for="range">Date Range:</label>
              <input class="range" id="range" type="text" .value=${this.range} @input=${this.onRange} />
            </div>
            <world-map class="world"></world-map>
            <div class="bar units">
              <label class="label" for="unit">OS downloads as:</label>
              <div class="picker">
                <select class="unit" id="unit">
                  <option selected>Count</option>
                </select>
                <svg class="caret" viewBox="0 0 8 6" aria-hidden="true"><path d="M0 0h8L4 6z" fill="#888" /></svg>
              </div>
            </div>
            <table class="stats">
              <colgroup>
                <col class="c-rank" />
                <col />
                ${columns.map(([, c]) => html`<col class=${c} />`)}
                <col class="c-total" />
              </colgroup>
              <thead>
                <tr>
                  <td class="head"></td>
                  <th class="head left" scope="col"><button class="sorter" type="button">Country ${sortIcon}</button></th>
                  ${columns.map(
                    ([n]) => html`<th class="head" scope="col">
                      <button class="sorter stacked" type="button">${n} ${sortIcon}</button>
                    </th>`
                  )}
                  <th class="head" scope="col"><button class="sorter" type="button">Total ${sortIcon}</button></th>
                </tr>
              </thead>
              <tbody>
                ${rows.map(
                  ([name, ...values], i) => html`<tr class="row">
                    <td class="cell">${i + 1}.</td>
                    <td class="cell left">${name}</td>
                    ${values.map((v) => html`<td class="cell">${v.toLocaleString("en-US")}</td>`)}
                  </tr>`
                )}
              </tbody>
            </table>
          </main>
        </div>
      </div>
    `;
  }
}
